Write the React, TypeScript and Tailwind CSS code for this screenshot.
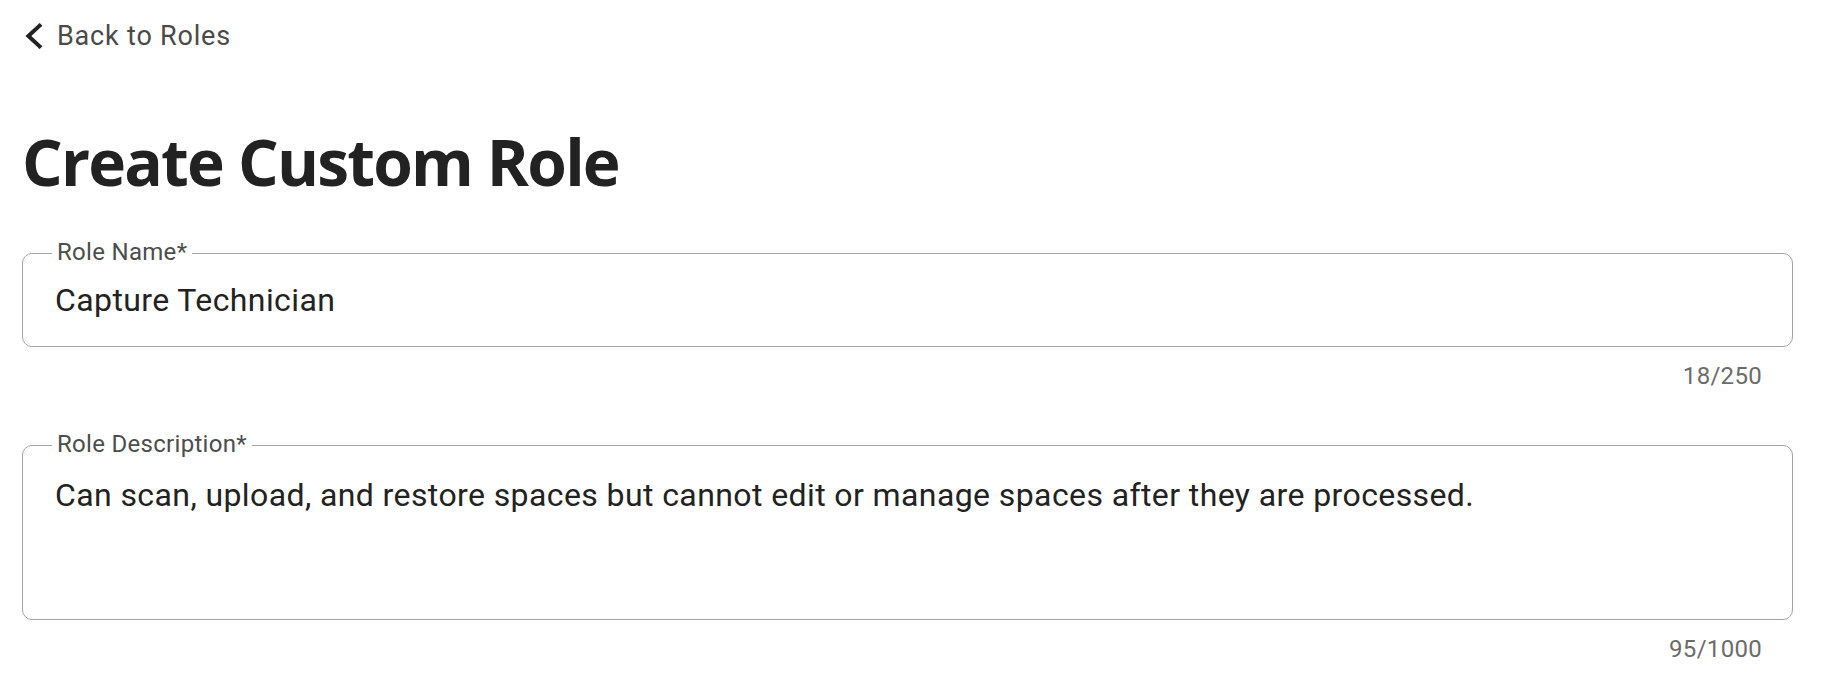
import React from "react";

function Field({
  label,
  value,
  counter,
  boxClass,
}: {
  label: string;
  value: string;
  counter: string;
  boxClass: string;
}) {
  return (
    <div>
      <div
        className={`relative rounded-[10px] border border-[#a3a3a3] px-[32px] ${boxClass}`}
      >
        <span className="absolute left-[29px] top-[-14px] bg-white px-[5px] text-[24px] leading-[24px] tracking-[0.3px] text-[#4d4d4d]">
          {label}
        </span>
        <div className="text-[32px] leading-[46px] tracking-[0.4px] text-[#222222]">
          {value}
        </div>
      </div>
      <div className="mt-[17px] flex justify-end pr-[31px]">
        <span className="text-[24px] leading-[24px] tracking-[0.3px] text-[#6b6b6b]">
          {counter}
        </span>
      </div>
    </div>
  );
}

export default function App() {
  return (
    <div className="min-h-screen bg-white pl-[22px] pr-[45px] font-['Roboto',sans-serif]">
      <div className="mt-[16px] flex h-[40px] items-center">
        <svg
          width="18"
          height="26"
          viewBox="0 0 18 26"
          className="ml-[3px]"
          aria-hidden="true"
        >
          <polyline
            points="16,1.4 3.4,13 16,24.6"
            fill="none"
            stroke="#222222"
            strokeWidth="4"
            strokeLinejoin="miter"
            strokeLinecap="butt"
          />
        </svg>
        <span className="ml-[14px] text-[27px] leading-[40px] tracking-[0.8px] text-[#4a4a4a]">
          Back to Roles
        </span>
      </div>

      <h1 className="mt-[68px] font-['Open_Sans',sans-serif] text-[64px] font-bold leading-[76px] tracking-[-1.8px] text-[#222222]">
        Create Custom Role
      </h1>

      <div className="mt-[53px]">
        <Field
          label="Role Name*"
          value="Capture Technician"
          counter="18/250"
          boxClass="h-[94px] pt-[23px]"
        />
      </div>

      <div className="mt-[57px]">
        <Field
          label="Role Description*"
          value="Can scan, upload, and restore spaces but cannot edit or manage spaces after they are processed."
          counter="95/1000"
          boxClass="h-[175px] pt-[26px]"
        />
      </div>
    </div>
  );
}
